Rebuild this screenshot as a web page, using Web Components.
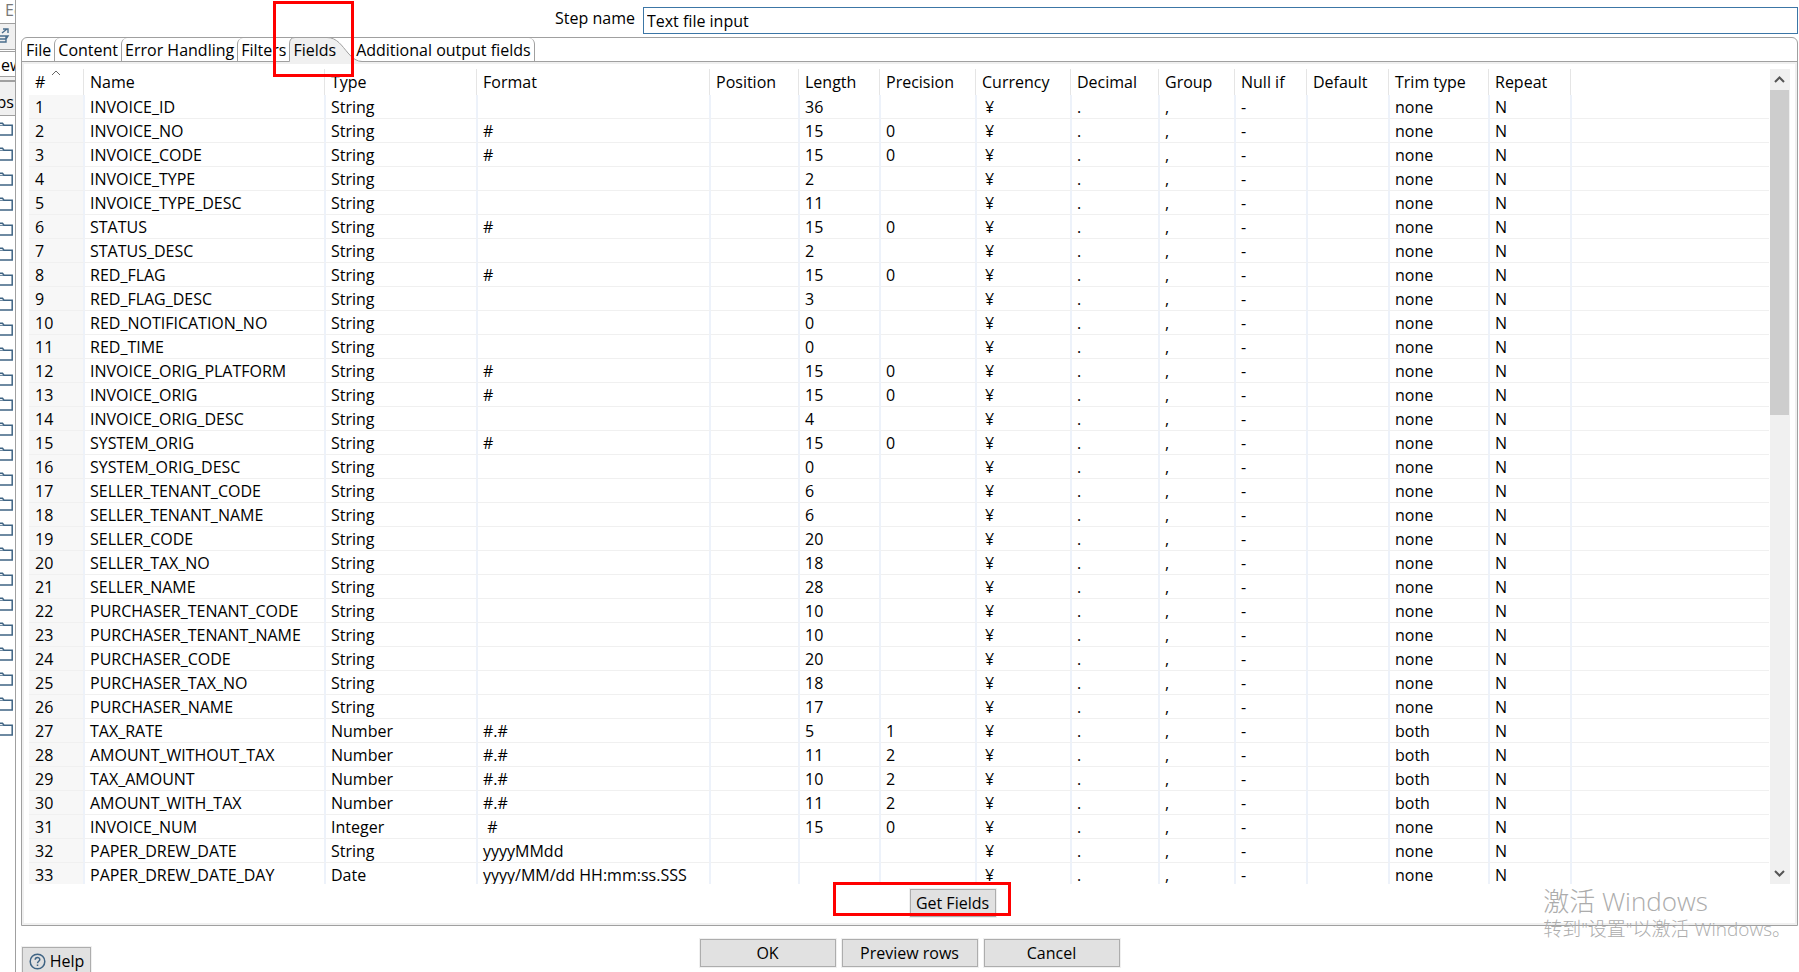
<!DOCTYPE html>
<html lang="en">
<head>
<meta charset="utf-8">
<title>Text file input</title>
<style>
  html, body { margin: 0; height: 100%; overflow: hidden; background: #fff; }
  body { font: 16px/24px "Open Sans", "Noto Sans CJK SC", sans-serif; color: #000; }
</style>
</head>
<body>
<step-dialog></step-dialog>

<script>
const define = (name, html, setup) => {
  const template = document.createElement('template');
  template.innerHTML = html;
  customElements.define(name, class extends HTMLElement {
    constructor() {
      super();
      this.attachShadow({ mode: 'open' }).append(template.content.cloneNode(true));
    }
    connectedCallback() { if (setup) setup(this, this.shadowRoot); }
  });
};

/* Sliver of the main window that shows beside the dialog */
define('back-window', `
  <style>
    :host { display: flex; flex-direction: column; overflow: hidden; border-right: 1px solid #a0a0a0; white-space: nowrap; }
    div { flex: none; box-sizing: border-box; overflow: hidden; }
    .title { height: 23px; padding-left: 5px; line-height: 20px; color: #777; }
    .tools { height: 27px; background: #f0f0f0; border-top: 1px solid #a0a0a0; border-bottom: 1px solid #a0a0a0; padding-top: 4px; }
    .view { height: 26px; line-height: 26px; margin-top: 1px; border-top: 1px solid #a0a0a0; border-bottom: 1px solid #a0a0a0; padding-left: 1px; }
    .gap { height: 5px; background: #f0f0f0; border-bottom: 2px solid #a0a0a0; }
    .steps { display: flex; justify-content: flex-end; height: 34px; padding-right: 1px; background: #f0f0f0; border-bottom: 1px solid #a0a0a0; line-height: 40px; }
    .list { padding-top: 6px; }
    svg { display: block; }
    .list svg { margin-bottom: 11px; }
  </style>
  <div class="title">Ed</div>
  <div class="tools"><svg width="10" height="16" fill="none" stroke="#4a6d8c" stroke-width="1.4"><path d="M0 8H6V14H0M0 11H6L8 8H5M2 5L7 1M3 1H8V5"/></svg></div>
  <div class="view">ew</div>
  <div class="gap"></div>
  <div class="steps">ps</div>
  <div class="list"></div>
`, (el, root) => {
  root.querySelector('.list').innerHTML = Array(25).fill(
    '<svg width="14" height="14" fill="none" stroke="#3f6484" stroke-width="1.5"><path d="M0 1.200H2.500L4 3.200H12.200V13H0"/><path stroke-width=".8" d="M0 3.400H4"/></svg>').join('');
});

define('step-name', `
  <style>
    :host { display: grid; grid-template-columns: 35% 1fr; }
    label { justify-self: end; padding-right: 8px; line-height: 22px; }
    input { font: inherit; height: 27px; box-sizing: border-box; min-width: 0; border: 1px solid #3c76a6; padding: 0 3px; outline: 0; border-radius: 0; background: #fff; }
  </style>
  <label for="name">Step name</label>
  <input id="name" type="text" value="Text file input">
`);

define('tab-item', `
  <style>
    :host { display: block; position: relative; }
    button { all: unset; display: block; box-sizing: border-box; height: 100%; padding: 0 3px; line-height: 25px; border-left: 1px solid #a0a0a0; border-top-left-radius: 6px; white-space: nowrap; position: relative; }
    svg { display: none; position: absolute; left: 0; top: -1px; }
    :host([first]) button { border-left-color: transparent; }
    :host([last]) button { border-left-color: transparent; border-right: 1px solid #a0a0a0; border-top-right-radius: 6px; }
    :host([selected]) svg { display: block; }
    :host([selected]) button { border-color: transparent; padding-right: 16px; }
  </style>
  <svg width="76" height="26" fill="#f0f0f0"><path d="M.5 26V7Q.5 .5 6 .5H38C48 .5 53 9 59 16Q66 24.500 73 24.500V26Z"/><path fill="none" stroke="#a0a0a0" d="M.5 24.500V7Q.5 .5 6 .5H38C48 .5 53 9 59 16Q66 24.500 73 24.500"/></svg>
  <button type="button" role="tab"><slot></slot></button>
`, (el, root) => root.querySelector('button').setAttribute('aria-selected', el.hasAttribute('selected')));

define('tab-panel', `
  <style>
    :host { display: flex; flex-direction: column; min-height: 0; border: 1px solid #a0a0a0; border-radius: 6px 6px 0 0; }
    .tabs { flex: none; display: flex; height: 23px; border-bottom: 1px solid #a0a0a0; }
    .body { flex: 1; min-height: 0; display: flex; flex-direction: column; border: 2px solid #f0f0f0; padding: 5px; }
  </style>
  <div class="tabs" role="tablist"><slot name="tab"></slot></div>
  <div class="body"><slot></slot></div>
`);

define('scroll-bar', `
  <style>
    :host { display: flex; flex-direction: column; width: 20px; background: #f0f0f0; }
    svg { flex: none; display: block; }
    .track { flex: 1; padding-right: 1px; }
    .thumb { height: 42%; background: #cdcdcd; }
  </style>
  <svg width="20" height="21" fill="none" stroke="#555" stroke-width="2"><path d="M5 13L9.500 8.500L14 13"/></svg>
  <div class="track"><div class="thumb"></div></div>
  <svg width="20" height="21" fill="none" stroke="#555" stroke-width="2"><path d="M5 8L9.500 12.500L14 8"/></svg>
`);

const COLUMNS = [['#', 56], ['Name', 241], ['Type', 152], ['Format', 233], ['Position', 89], ['Length', 81], ['Precision', 96],
  ['Currency', 95], ['Decimal', 88], ['Group', 76], ['Null if', 72], ['Default', 82], ['Trim type', 100], ['Repeat', 82]];

/* name, type, format, length, precision, trim type */
const FIELDS = `INVOICE_ID|String||36||none
INVOICE_NO|String|#|15|0|none
INVOICE_CODE|String|#|15|0|none
INVOICE_TYPE|String||2||none
INVOICE_TYPE_DESC|String||11||none
STATUS|String|#|15|0|none
STATUS_DESC|String||2||none
RED_FLAG|String|#|15|0|none
RED_FLAG_DESC|String||3||none
RED_NOTIFICATION_NO|String||0||none
RED_TIME|String||0||none
INVOICE_ORIG_PLATFORM|String|#|15|0|none
INVOICE_ORIG|String|#|15|0|none
INVOICE_ORIG_DESC|String||4||none
SYSTEM_ORIG|String|#|15|0|none
SYSTEM_ORIG_DESC|String||0||none
SELLER_TENANT_CODE|String||6||none
SELLER_TENANT_NAME|String||6||none
SELLER_CODE|String||20||none
SELLER_TAX_NO|String||18||none
SELLER_NAME|String||28||none
PURCHASER_TENANT_CODE|String||10||none
PURCHASER_TENANT_NAME|String||10||none
PURCHASER_CODE|String||20||none
PURCHASER_TAX_NO|String||18||none
PURCHASER_NAME|String||17||none
TAX_RATE|Number|#.#|5|1|both
AMOUNT_WITHOUT_TAX|Number|#.#|11|2|both
TAX_AMOUNT|Number|#.#|10|2|both
AMOUNT_WITH_TAX|Number|#.#|11|2|both
INVOICE_NUM|Integer| #|15|0|none
PAPER_DREW_DATE|String|yyyyMMdd|||none
PAPER_DREW_DATE_DAY|Date|yyyy/MM/dd HH:mm:ss.SSS|||none`.split('\n').map(line => line.split('|'));

define('field-table', `
  <style>
    :host { flex: 1; min-height: 0; display: flex; overflow: hidden; }
    .view { flex: 1; min-width: 0; overflow: hidden; padding-right: 1px; }
    table { width: 100%; table-layout: fixed; border-collapse: separate; border-spacing: 0; }
    th, td { box-sizing: border-box; padding: 0 0 0 5px; text-align: left; font-weight: 400; white-space: pre; }
    th { height: 26px; line-height: 26px; background: linear-gradient(#e5e5e5, #e5e5e5) right 1px top / 1px 100% no-repeat; }
    td { height: 24px; padding-top: 2px; line-height: 21px; border-right: 2px solid #edf2fa; border-bottom: 1px solid #f0f0f0; }
    th:last-child { background: none; }
    td:last-child { border-right: 0; }
    th:first-child { position: relative; }
    td:first-child { background: #f7f7f7; }
    th:first-child, td:first-child { padding-left: 6px; }
    td:nth-child(8) { padding-left: 8px; }
    svg { position: absolute; left: 22px; top: 1px; }
    scroll-bar { flex: none; }
  </style>
  <div class="view"><table><colgroup></colgroup><thead><tr></tr></thead><tbody></tbody></table></div>
  <scroll-bar></scroll-bar>
`, (el, root) => {
  root.querySelector('colgroup').innerHTML = COLUMNS.map(([, w]) => `<col style="width:${w}px">`).join('') + '<col>';
  root.querySelector('thead tr').innerHTML = COLUMNS.map(([name], i) =>
    `<th scope="col">${name}${i ? '' : '<svg width="10" height="6" fill="none" stroke="#666"><path d="M1 5L5 1L9 5"/></svg>'}</th>`).join('') + '<th></th>';
  root.querySelector('tbody').innerHTML = FIELDS.map(([name, type, format, length, precision, trim], i) =>
    '<tr>' + [i + 1, name, type, format, '', length, precision, '¥', '.', ',', '-', '', trim, 'N', '']
      .map(v => `<td>${v}</td>`).join('') + '</tr>').join('');
});

define('push-button', `
  <style>
    :host { display: block; }
    button { display: flex; align-items: center; justify-content: center; gap: 4px; box-sizing: border-box; width: 100%; height: 28px; margin: 0; padding: 0 4px; font: inherit; color: #000; background: #e1e1e1; border: 1px solid #adadad; border-radius: 0; outline: 1px solid #f0f0f0; white-space: nowrap; }
  </style>
  <button type="button"><slot name="icon"></slot><slot></slot></button>
`);

define('activation-notice', `
  <style>
    :host { display: block; color: #acacac; white-space: nowrap; font-weight: 300; pointer-events: none; }
    p { margin: 0; line-height: 28px; }
    .big { font-size: 26px; }
    .small { font-size: 19px; }
  </style>
  <p class="big" lang="zh-CN">激活 Windows</p>
  <p class="small" lang="zh-CN">转到"设置"以激活 Windows。</p>
`);

define('step-dialog', `
  <style>
    :host { display: grid; grid-template-columns: 16px 1fr; height: 100%; position: relative; overflow: hidden; }
    main { display: flex; flex-direction: column; min-width: 0; min-height: 0; padding: 7px 1px 0 5px; }
    tab-panel { flex: 1; margin-top: 3px; }
    .get { align-self: flex-start; flex: none; width: 86px; margin: 5px 0 1px 50%; }
    footer { flex: none; display: grid; grid-template-columns: 1fr auto 1fr; height: 33px; padding-top: 13px; }
    .help { width: 69px; margin: 8px 0 0 1px; }
    .help svg { flex: none; display: block; }
    .actions { display: flex; gap: 6px; }
    .actions push-button { width: 136px; }
    .mark { position: absolute; box-sizing: border-box; border: 3px solid #f00; pointer-events: none; }
    .mark.tab { left: 273px; top: 1px; width: 81px; height: 76px; }
    .mark.fields { left: 833px; top: 882px; width: 178px; height: 34px; }
    activation-notice { position: absolute; right: 8px; bottom: 29px; }
  </style>
  <back-window></back-window>
  <main>
    <step-name></step-name>
    <tab-panel>
      <tab-item slot="tab" first>File</tab-item>
      <tab-item slot="tab">Content</tab-item>
      <tab-item slot="tab">Error Handling</tab-item>
      <tab-item slot="tab">Filters</tab-item>
      <tab-item slot="tab" selected>Fields</tab-item>
      <tab-item slot="tab" last>Additional output fields</tab-item>
      <field-table></field-table>
      <push-button class="get">Get Fields</push-button>
    </tab-panel>
    <footer>
      <push-button class="help"><svg slot="icon" width="17" height="17" viewBox="0 0 17 17" fill="none" stroke="#3f6484" stroke-width="1.5"><circle cx="8.500" cy="8.500" r="7.300"/><path d="M6.200 6.800C6.200 3.800 10.800 3.800 10.800 6.600C10.800 8.300 8.500 8.200 8.500 10.200M8.500 11.500V13"/></svg>Help</push-button>
      <div class="actions">
        <push-button>OK</push-button>
        <push-button>Preview rows</push-button>
        <push-button>Cancel</push-button>
      </div>
    </footer>
  </main>
  <div class="mark tab"></div>
  <div class="mark fields"></div>
  <activation-notice></activation-notice>
`);
</script>
</body>
</html>
